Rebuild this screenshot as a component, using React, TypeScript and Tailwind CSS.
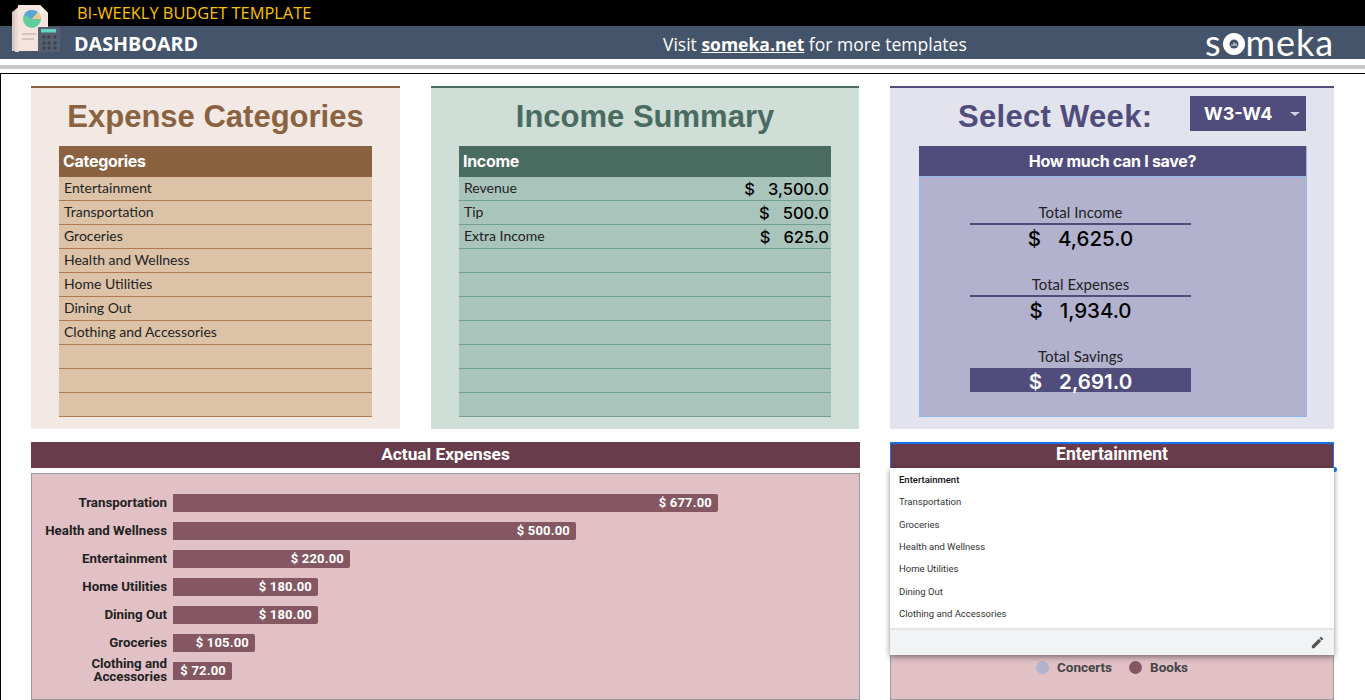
import { MdEdit } from "react-icons/md";

const categories = [
  "Entertainment",
  "Transportation",
  "Groceries",
  "Health and Wellness",
  "Home Utilities",
  "Dining Out",
  "Clothing and Accessories",
];

const income = [
  { name: "Revenue", amount: "3,500.0" },
  { name: "Tip", amount: "500.0" },
  { name: "Extra Income", amount: "625.0" },
];

const expenses = [
  { name: "Transportation", value: "$ 677.00", width: 545 },
  { name: "Health and Wellness", value: "$ 500.00", width: 403 },
  { name: "Entertainment", value: "$ 220.00", width: 177 },
  { name: "Home Utilities", value: "$ 180.00", width: 145 },
  { name: "Dining Out", value: "$ 180.00", width: 145 },
  { name: "Groceries", value: "$ 105.00", width: 82 },
  { name: "Clothing and Accessories", value: "$ 72.00", width: 59 },
];

function AppIcon() {
  return (
    <svg className="absolute left-[10px] top-[3px]" width="52" height="50" viewBox="0 0 52 50">
      <path d="M2 9 L8 5 L8 48 L2 48 Z" fill="#dcc8c3" />
      <path d="M5 7 L9 3 L9 49 L5 49 Z" fill="#ead7d1" />
      <path d="M8 2 L30 2 L38 10 L38 48 L8 48 Z" fill="#f5e3de" />
      <path d="M30 2 L38 10 L30 10 Z" fill="#fbf3f0" />
      <circle cx="22" cy="16" r="9" fill="#63cc9e" />
      <path d="M22 16 L14.2 11.5 A9 9 0 0 1 27.8 9.1 Z" fill="#58a6d6" />
      <path d="M22 16 L27.8 9.1 A9 9 0 0 1 31 16 Z" fill="#f0c98c" />
      <path d="M12 31 H26 M12 36 H24" stroke="#cdb9b4" strokeWidth="1.5" />
      <rect x="28" y="24" width="22" height="25" rx="1" fill="#565f6f" />
      <rect x="31" y="26" width="15" height="3.5" fill="#66d2c0" />
      {[34, 40, 45].map((y) =>
        [34, 39, 45].map((x) => <circle key={`${x}-${y}`} cx={x} cy={y} r="1.7" fill="#3b4252" />),
      )}
    </svg>
  );
}

function Logo() {
  return (
    <div className="flex items-center text-white text-[36px] leading-none tracking-[0.9px] font-['Lato',sans-serif] mr-[31px] -mt-[5px]">
      <span>s</span>
      <svg className="mx-[1px] mt-[5px]" width="22" height="22" viewBox="0 0 22 22">
        <circle cx="11" cy="11" r="11" fill="#fff" />
        <circle cx="11" cy="11" r="4.5" fill="#44546a" />
        <path d="M9 13 V11.5 M11 13 V9.5 M13 13 V10.5" stroke="#fff" strokeWidth="1" />
      </svg>
      <span>meka</span>
    </div>
  );
}

function ListTable({
  heading,
  headClass,
  rowClass,
  children,
}: {
  heading: string;
  headClass: string;
  rowClass: string;
  children: (i: number) => React.ReactNode;
}) {
  return (
    <div className="mx-[28px]">
      <div className={`h-[31px] pl-[4px] pb-[2px] flex items-center text-white text-[16px] font-bold tracking-[-0.3px] font-['Inter',sans-serif] ${headClass}`}>{heading}</div>
      {Array.from({ length: 10 }).map((_, i) => (
        <div key={i} className={`h-[24px] border-b pb-[2px] flex items-center justify-between pl-[5px] pr-[2px] text-[14px] text-[#222] font-['Lato',sans-serif] ${rowClass}`}>
          {children(i)}
        </div>
      ))}
    </div>
  );
}

function Stat({ label, value, highlight }: { label: string; value: string; highlight?: boolean }) {
  return (
    <div className="w-[221px] text-center">
      <div className="h-[20px] text-[15px] leading-[18px] text-[#222] font-['Lato',sans-serif]">{label}</div>
      {highlight ? (
        <div className="h-[24px] mt-[1px] pt-[5px] bg-[#504c7c] text-white flex items-center justify-center gap-[17px] text-[20.5px] font-semibold">
          <span>$</span>
          <span>{value}</span>
        </div>
      ) : (
        <div className="h-[28px] border-t-2 border-[#504c7c] pt-[2px] flex items-center justify-center gap-[17px] text-[20.5px] font-medium text-black">
          <span>$</span>
          <span>{value}</span>
        </div>
      )}
    </div>
  );
}

const titleClass = "pt-[9px] text-[31px] leading-[40px] font-bold font-['Liberation_Sans',sans-serif]";

export default function App() {
  return (
    <div className="relative w-[1365px] h-[700px] overflow-hidden bg-white font-['Inter',sans-serif]">
      {/* Title bars */}
      <div className="h-[26px] bg-black pl-[77px] flex items-center text-[#ffc000] text-[16.4px] font-['Open_Sans',sans-serif]">
        BI-WEEKLY BUDGET TEMPLATE
      </div>
      <div className="h-[33px] bg-[#44546a] pl-[74px] pt-[3px] flex items-center text-white font-['Open_Sans',sans-serif]">
        <div className="w-[589px] text-[19.7px] font-bold">DASHBOARD</div>
        <div className="flex-1 text-[17.5px]">
          Visit <span className="font-bold underline">someka.net</span> for more templates
        </div>
        <Logo />
      </div>
      <AppIcon />
      <div className="h-[4px] mt-[6px] bg-[#c8c8c8]" />

      {/* Sheet */}
      <div className="mt-[4px] h-[627px] border-t border-l border-black pt-[12px] pl-[30px]">
        <div className="flex gap-[31px] h-[343px]">
          <section className="w-[369px] bg-[#f2e9e4] border-t-2 border-[#8a6240]">
            <h2 className={`h-[58px] text-center text-[#8a6240] ${titleClass}`}>Expense Categories</h2>
            <ListTable heading="Categories" headClass="bg-[#8a6240]" rowClass="bg-[#dcc3a8] border-[#b07a50]">
              {(i) => <span>{categories[i]}</span>}
            </ListTable>
          </section>

          <section className="w-[428px] bg-[#d0ded8] border-t-2 border-[#4a6b60]">
            <h2 className={`h-[58px] text-center text-[#4a6b60] ${titleClass}`}>Income Summary</h2>
            <ListTable heading="Income" headClass="bg-[#4a6b60]" rowClass="bg-[#a9c4bb] border-[#6fa090]">
              {(i) =>
                income[i] && (
                  <>
                    <span>{income[i].name}</span>
                    <span className="flex gap-[13px] text-[16.5px] font-medium text-black font-['Inter',sans-serif] pt-[3px]">
                      <span>$</span>
                      <span>{income[i].amount}</span>
                    </span>
                  </>
                )
              }
            </ListTable>
          </section>

          <section className="w-[444px] bg-[#e3e3ed] border-t-2 border-[#504c7c]">
            <div className="h-[58px] flex items-start pl-[68px]">
              <h2 className={`w-[232px] tracking-[0.3px] text-[#504c7c] ${titleClass}`}>Select Week:</h2>
              <div className="mt-[8px] w-[116px] h-[35px] bg-[#504c7c] flex items-center justify-between pl-[14px] pr-[6px] text-white text-[18px] font-bold">
                W3-W4
                <span className="w-0 h-0 border-x-[5px] border-x-transparent border-t-[4px] border-t-[#d0d0e0]" />
              </div>
            </div>
            <div className="ml-[29px] w-[388px]">
              <div className="h-[31px] bg-[#504c7c] border-r border-b border-[#8fb8e8] flex items-center justify-center text-white text-[16px] font-bold tracking-[-0.3px]">
                How much can I save?
              </div>
              <div className="h-[240px] bg-[#b2b2cf] border-x border-b border-[#8fb8e8] pl-[50px] pt-[26px] flex flex-col gap-[24px]">
                <Stat label="Total Income" value="4,625.0" />
                <Stat label="Total Expenses" value="1,934.0" />
                <Stat label="Total Savings" value="2,691.0" highlight />
              </div>
            </div>
          </section>
        </div>

        <div className="flex gap-[30px] mt-[13px] font-['Roboto',sans-serif]">
          <section className="w-[829px]">
            <div className="h-[26px] bg-[#693c4b] flex items-center justify-center text-white text-[17.3px] font-bold">Actual Expenses</div>
            <div className="mt-[5px] h-[227px] bg-[#e1c0c6] border border-[#9a9a9a] pt-[20px] flex flex-col gap-[10px]">
              {expenses.map((e) => (
                <div key={e.name} className="flex items-center h-[18px]">
                  <div className="w-[135px] shrink-0 pb-[2px] text-right text-[13.3px] font-bold leading-[13px] text-[#222]">{e.name}</div>
                  <div
                    className="ml-[6px] h-[18px] bg-[#845763] rounded-r-[2px] flex items-center justify-end pr-[6px] text-[13px] font-bold text-white tracking-[0.2px]"
                    style={{ width: e.width }}
                  >
                    {e.value}
                  </div>
                </div>
              ))}
            </div>
          </section>

          <section className="relative w-[444px]">
            <div className="h-[26px] pb-[3px] bg-[#693c4b] border-t-2 border-x border-[#1a73e8] flex items-center justify-center text-white text-[17.5px] font-bold">Entertainment</div>
            <div className="mt-[5px] h-[227px] bg-[#e1c0c6] border border-[#9a9a9a] pt-[183px]">
              <div className="flex items-center justify-center gap-[8px] text-[13.5px] font-bold text-[#444]">
                <span className="w-[13px] h-[13px] rounded-full bg-[#b2b2cf]" />
                <span className="mr-[9px]">Concerts</span>
                <span className="w-[13px] h-[13px] rounded-full bg-[#845763]" />
                <span>Books</span>
              </div>
            </div>
            <span className="absolute right-[-3px] top-[25px] w-[5px] h-[5px] rounded-full bg-[#1a73e8]" />
            {/* open dropdown */}
            <div className="absolute left-0 right-0 top-[26px] h-[187px] bg-white shadow-[0_2px_6px_rgba(0,0,0,0.45)] flex flex-col">
              <ul className="flex-1 pl-[9px] pt-[1px] text-[9.5px] text-[#333]">
                {categories.map((c, i) => (
                  <li key={c} className={`h-[22.3px] flex items-center ${i === 0 ? "text-[#111] font-medium" : ""}`}>
                    {c}
                  </li>
                ))}
              </ul>
              <div className="h-[27px] bg-[#f1f3f4] border-t-2 border-[#e6e6e6] flex items-center justify-end pr-[9px]">
                <MdEdit size={15} className="text-[#555]" />
              </div>
            </div>
          </section>
        </div>
      </div>
    </div>
  );
}
